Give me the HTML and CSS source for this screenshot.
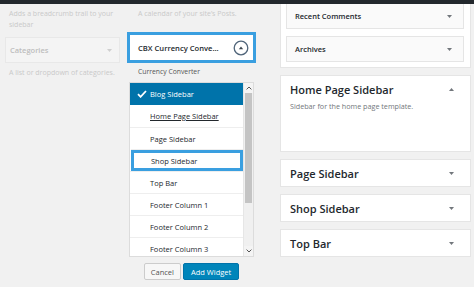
FILE: index.html
```html
<!DOCTYPE html>
<html lang="en">
<head>
  <meta charset="UTF-8" />
  <title>Widgets</title>
  <link rel="stylesheet" href="styles.css">
</head>
<body>

  <div class="adminbar"></div>

  <div class="screen">

    <!-- Available widgets (faded while choosing) -->
    <div class="available">
      <div class="col col-one">
        <p class="faded-desc">Adds a breadcrumb trail to your sidebar</p>
        <div class="faded-widget">
          <span>Categories</span>
          <svg class="tri" width="5" height="3" viewBox="0 0 5 3"><path d="M0 0h5L2.5 3z" fill="#cfcfcf"/></svg>
        </div>
        <p class="faded-desc">A list or dropdown of categories.</p>
      </div>

      <div class="col col-two">
        <p class="faded-desc indent">A calendar of your site’s Posts.</p>

        <div class="widget-head">
          <span>CBX Currency Conve...</span>
          <svg class="toggle" width="16" height="16" viewBox="0 0 16 16">
            <circle cx="8" cy="8" r="6.8" fill="#fff" stroke="#50657a" stroke-width="1.3"/>
            <path d="M5.8 9.2h4.4L8 6.6z" fill="#3c4650"/>
          </svg>
        </div>
        <p class="widget-sub">Currency Converter</p>

        <div class="chooser">
          <ul class="sidebar-list">
            <li class="selected">
              <span class="check">
                <svg width="10" height="8" viewBox="0 0 10 8"><path d="M1 4.2l2.6 2.6L9 1" fill="none" stroke="#fff" stroke-width="1.8"/></svg>
              </span>Blog Sidebar
            </li>
            <li class="hover"><span class="check"></span>Home Page Sidebar</li>
            <li><span class="check"></span>Page Sidebar</li>
            <li class="focused"><span class="check"></span>Shop Sidebar</li>
            <li><span class="check"></span>Top Bar</li>
            <li><span class="check"></span>Footer Column 1</li>
            <li><span class="check"></span>Footer Column 2</li>
            <li><span class="check"></span>Footer Column 3</li>
          </ul>
          <div class="scrollbar">
            <div class="scroll-btn">
              <svg width="6" height="4" viewBox="0 0 6 4"><path d="M0.6 3.4L3 1l2.4 2.4" fill="none" stroke="#555" stroke-width="1"/></svg>
            </div>
            <div class="scroll-thumb"></div>
            <div class="scroll-space"></div>
            <div class="scroll-btn">
              <svg width="6" height="4" viewBox="0 0 6 4"><path d="M0.6 0.6L3 3l2.4-2.4" fill="none" stroke="#555" stroke-width="1"/></svg>
            </div>
          </div>
        </div>

        <div class="actions">
          <button class="btn">Cancel</button>
          <button class="btn primary">Add Widget</button>
        </div>
      </div>
    </div>

    <!-- Registered sidebars -->
    <div class="sidebars">
      <div class="open-panel">
        <div class="inner-widget">
          <span>Recent Comments</span>
          <svg class="tri" width="5" height="3" viewBox="0 0 5 3"><path d="M0 0h5L2.5 3z" fill="#72777c"/></svg>
        </div>
        <div class="inner-widget">
          <span>Archives</span>
          <svg class="tri" width="5" height="3" viewBox="0 0 5 3"><path d="M0 0h5L2.5 3z" fill="#72777c"/></svg>
        </div>
      </div>

      <div class="panel tall">
        <div class="panel-head">
          <h2>Home Page Sidebar</h2>
          <svg class="tri" width="5" height="3" viewBox="0 0 5 3"><path d="M0 3h5L2.5 0z" fill="#72777c"/></svg>
        </div>
        <p class="panel-desc">Sidebar for the home page template.</p>
      </div>

      <div class="panel">
        <div class="panel-head">
          <h2>Page Sidebar</h2>
          <svg class="tri" width="5" height="3" viewBox="0 0 5 3"><path d="M0 0h5L2.5 3z" fill="#72777c"/></svg>
        </div>
      </div>

      <div class="panel">
        <div class="panel-head">
          <h2>Shop Sidebar</h2>
          <svg class="tri" width="5" height="3" viewBox="0 0 5 3"><path d="M0 0h5L2.5 3z" fill="#72777c"/></svg>
        </div>
      </div>

      <div class="panel">
        <div class="panel-head">
          <h2>Top Bar</h2>
          <svg class="tri" width="5" height="3" viewBox="0 0 5 3"><path d="M0 0h5L2.5 3z" fill="#72777c"/></svg>
        </div>
      </div>
    </div>

  </div>

</body>
</html>
```

FILE: styles.css
```css
* {
  margin: 0;
  padding: 0;
  box-sizing: border-box;
}

html, body {
  width: 474px;
  height: 287px;
  overflow: hidden;
}

body {
  background: #f1f1f1;
  font-family: 'Open Sans', 'Noto Sans', sans-serif;
  color: #23282d;
}

.adminbar {
  position: fixed;
  top: 0; left: 0; right: 0;
  height: 4px;
  background: #23282d;
  z-index: 5;
}

.screen {
  display: flex;
  align-items: flex-start;
}

/* Available widgets */
.available {
  display: flex;
  gap: 7px;
  padding-left: 5px;
  width: 256px;
}

.col {
  padding-top: 8px;
}

.col-one {
  width: 115px;
}

.col-two {
  width: 129px;
}

.faded-desc {
  font-size: 7px;
  line-height: 11px;
  color: #c9c9c9;
  padding-left: 4px;
}

.faded-desc.indent {
  padding-left: 11px;
}

.faded-widget {
  margin: 7px 0 4px;
  height: 26px;
  display: flex;
  align-items: center;
  justify-content: space-between;
  padding: 0 7px 0 4px;
  background: #f4f4f4;
  border: 1px solid #e8e8e8;
  font-size: 7.5px;
  font-weight: 600;
  color: #bdbdbd;
}

.widget-head {
  margin-top: 13px;
  height: 31px;
  display: flex;
  align-items: center;
  justify-content: space-between;
  padding: 0 4px 0 8px;
  background: #fff;
  border: 3px solid #3a9fe0;
  font-size: 7.6px;
  font-weight: 600;
}

.widget-sub {
  margin-top: 3px;
  padding-left: 11px;
  font-size: 6.8px;
  line-height: 11px;
  color: #555;
}

/* Sidebar chooser list */
.chooser {
  margin: 5px 2px 0;
  height: 175px;
  display: flex;
  background: #fff;
  border: 1px solid #dcdcdc;
  overflow: hidden;
}

.sidebar-list {
  list-style: none;
  width: 113px;
}

.sidebar-list li {
  height: 22px;
  display: flex;
  align-items: center;
  font-size: 7.5px;
  color: #23282d;
  border-top: 1px solid #eee;
}

.sidebar-list li:first-child {
  border-top: none;
}

.sidebar-list .check {
  width: 20px;
  display: flex;
  justify-content: center;
  padding-left: 3px;
}

.sidebar-list .selected {
  background: #0073aa;
  color: #fff;
}

.sidebar-list .selected + li {
  border-top: none;
}

.sidebar-list .hover {
  text-decoration: underline;
}

.sidebar-list .focused {
  box-shadow: inset 0 0 0 3px #3a9fe0;
  margin-left: 1px;
}

.scrollbar {
  width: 10px;
  display: flex;
  flex-direction: column;
  background: #f0f0f0;
  border-left: 1px solid #e6e6e6;
}

.scroll-btn {
  height: 10px;
  display: flex;
  align-items: center;
  justify-content: center;
  background: #f4f4f4;
}

.scroll-thumb {
  height: 110px;
  margin: 0 1px;
  background: #c4c4c4;
}

.scroll-space {
  flex: 1;
}

.actions {
  margin-top: 6px;
  display: flex;
  justify-content: center;
  gap: 2px;
}

.btn {
  height: 17px;
  padding: 0 6px;
  font-family: inherit;
  font-size: 7.5px;
  color: #555;
  background: #f7f7f7;
  border: 1px solid #ccc;
  border-radius: 2px;
}

.btn.primary {
  padding: 0 7px;
  color: #fff;
  background: #0085ba;
  border-color: #0073aa;
}

/* Sidebars */
.sidebars {
  width: 191px;
  margin-left: 24px;
  display: flex;
  flex-direction: column;
  gap: 7px;
}

.open-panel {
  background: #fff;
  border: 1px solid #e5e5e5;
  border-top: none;
  padding: 3px 6px 5px 5px;
  display: flex;
  flex-direction: column;
  gap: 7px;
}

.inner-widget {
  height: 26px;
  display: flex;
  align-items: center;
  justify-content: space-between;
  padding: 0 11px 0 8px;
  background: #fafafa;
  border: 1px solid #e5e5e5;
  font-size: 7.5px;
  font-weight: 600;
}

.panel {
  height: 28px;
  background: #fff;
  border: 1px solid #e5e5e5;
}

.panel.tall {
  height: 77px;
}

.panel-head {
  height: 26px;
  display: flex;
  align-items: center;
  justify-content: space-between;
  padding: 0 16px 0 9px;
}

.panel-head h2 {
  font-size: 11px;
  font-weight: 600;
}

.panel-desc {
  margin-top: -1px;
  padding-left: 9px;
  font-size: 7.2px;
  line-height: 11px;
  color: #72777c;
}
```
